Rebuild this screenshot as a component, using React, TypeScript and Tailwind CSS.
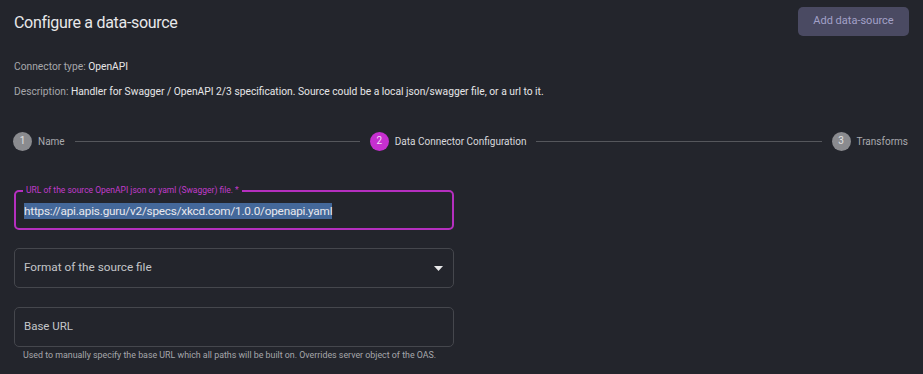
import React from "react";

function Step({ n, label, active }: { n: number; label: string; active?: boolean }) {
  return (
    <div className="flex items-center gap-[6px] shrink-0">
      <div
        className={
          "w-[19px] h-[19px] rounded-full flex items-center justify-center text-[10px] leading-none " +
          (active ? "bg-[#c62fd0] text-[#f3dff5]" : "bg-[#8a8b8f] text-[#e2e2e2]")
        }
      >
        {n}
      </div>
      <span className={"text-[10px] " + (active ? "text-[#d8d8dc]" : "text-[#a9aaae]")}>{label}</span>
    </div>
  );
}

export default function App() {
  return (
    <div
      className="w-[923px] h-[374px] bg-[#23252c] overflow-hidden text-[#e6e6e8]"
      style={{ fontFamily: 'Roboto, "Noto Sans", sans-serif' }}
    >
      <div className="flex items-start justify-between pl-[14px] pr-[14px] pt-[7px]">
        <h1 className="text-[16px] tracking-[-0.3px] leading-[29px] text-[#e8e8ea] mt-[1px]">Configure a data-source</h1>
        <button className="w-[111px] h-[29px] rounded-[5px] bg-[#4a4a62] text-[#a3a1c8] text-[11px]">
          Add data-source
        </button>
      </div>

      <div className="px-[14px] mt-[23px] text-[10.25px] leading-[14px]">
        <div>
          <span className="text-[#a6a7ab]">Connector type: </span>
          <span className="text-[#e6e6e8]">OpenAPI</span>
        </div>
        <div className="mt-[11px]">
          <span className="text-[#a6a7ab]">Description: </span>
          <span className="text-[#e6e6e8]">
            Handler for Swagger / OpenAPI 2/3 specification. Source could be a local json/swagger file, or a url to it.
          </span>
        </div>
      </div>

      <div className="flex items-center pl-[13px] pr-[15px] mt-[33px] h-[18px]">
        <Step n={1} label="Name" />
        <div className="flex-1 h-px bg-[#55575c] mx-[10px]" />
        <Step n={2} label="Data Connector Configuration" active />
        <div className="flex-1 h-px bg-[#55575c] mx-[10px]" />
        <Step n={3} label="Transforms" />
      </div>

      <div className="w-[440px] ml-[14px] mt-[40px] flex flex-col">
        <div className="relative h-[40px] rounded-[5px] border-2 border-[#b52fbf] flex items-center px-[8px] pt-[1px]">
          <span className="absolute left-[7px] top-[-8px] bg-[#23252c] px-[3px] text-[8.5px] leading-[12px] text-[#c13bcb]">
            URL of the source OpenAPI json or yaml (Swagger) file. *
          </span>
          <span className="text-[11.75px] tracking-[-0.2px] text-[#e9e9ee] bg-[#44689a] leading-[16px]">
            https://api.apis.guru/v2/specs/xkcd.com/1.0.0/openapi.yaml
          </span>
        </div>

        <div className="mt-[18px] h-[40px] rounded-[5px] border border-[#45474d] flex items-center justify-between pl-[9px] pr-[10px]">
          <span className="text-[11.75px] text-[#c4c5c9]">Format of the source file</span>
          <svg width="9" height="5" viewBox="0 0 9 5">
            <path d="M0 0 L9 0 L4.5 5 Z" fill="#e8e8ea" />
          </svg>
        </div>

        <div className="mt-[19px] h-[40px] rounded-[5px] border border-[#45474d] flex items-center pl-[9px]">
          <span className="text-[11.5px] text-[#c4c5c9]">Base URL</span>
        </div>
        <div className="pl-[9px] mt-[2px] text-[8.85px] leading-[12px] text-[#a6a7ab]">
          Used to manually specify the base URL which all paths will be built on. Overrides server object of the OAS.
        </div>
      </div>
    </div>
  );
}
